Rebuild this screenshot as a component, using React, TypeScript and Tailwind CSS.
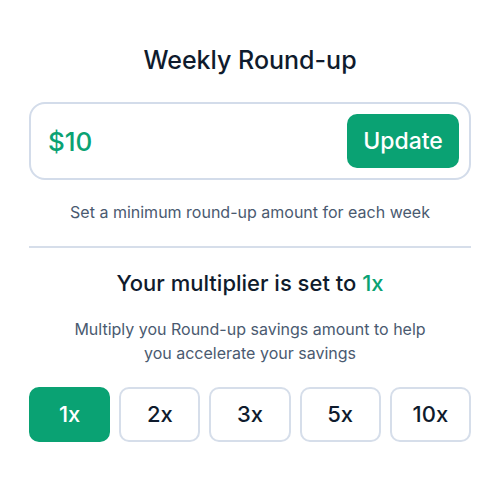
import React, { useState } from 'react';

const multipliers = [1, 2, 3, 5, 10];

const App: React.FC = () => {
  const [amount] = useState('$10');
  const [multiplier, setMultiplier] = useState(1);

  return (
    <div className="min-h-screen bg-white font-['Inter',sans-serif] text-[#0f1b2d]">
      <div className="mx-[29px] pt-[44px] flex flex-col items-center">
        <h1 className="text-[25px] leading-[32px] font-medium">Weekly Round-up</h1>

        {/* Amount input */}
        <div className="mt-[26px] w-full h-[78px] rounded-[16px] border-2 border-[#d3dcea] flex items-center justify-between pl-[17px] pr-[10px]">
          <span className="text-[26px] font-medium text-[#0aa273]">{amount}</span>
          <button className="h-[54px] w-[112px] rounded-[10px] bg-[#0aa273] text-white text-[23px] font-medium">
            Update
          </button>
        </div>

        <p className="mt-[21px] text-[16px] leading-[22px] text-[#4a5a70]">
          Set a minimum round-up amount for each week
        </p>

        <div className="mt-[23px] w-full h-[2px] bg-[#d6deea]" />

        <h2 className="mt-[20px] text-[22px] leading-[30px] font-medium">
          Your multiplier is set to <span className="text-[#0aa273]">{multiplier}x</span>
        </h2>

        <p className="mt-[19px] text-[16px] leading-[24px] text-[#4a5a70] text-center max-w-[370px]">
          Multiply you Round-up savings amount to help you accelerate your savings
        </p>

        {/* Multiplier options */}
        <div className="mt-[22px] w-full grid grid-cols-5 gap-[9px]">
          {multipliers.map((m) => (
            <button
              key={m}
              onClick={() => setMultiplier(m)}
              className={
                m === multiplier
                  ? 'h-[55px] rounded-[10px] border-2 border-[#0aa273] bg-[#0aa273] text-white text-[22px] font-medium'
                  : 'h-[55px] rounded-[10px] border-2 border-[#d6deea] bg-white text-[#0f1b2d] text-[22px] font-medium'
              }
            >
              {m}x
            </button>
          ))}
        </div>
      </div>
    </div>
  );
};

export default App;
